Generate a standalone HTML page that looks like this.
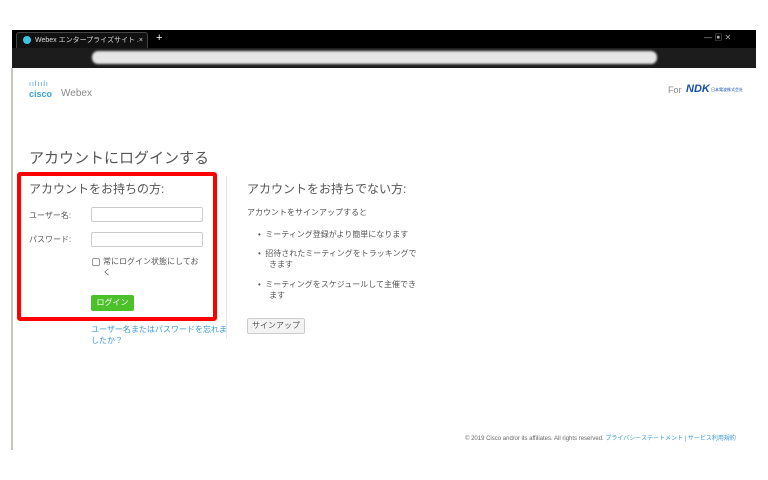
<!DOCTYPE html>
<html><head><meta charset="utf-8"><style>
*{margin:0;padding:0;box-sizing:border-box}
body{width:768px;height:480px;background:#fff;position:relative;overflow:hidden;font-family:"Liberation Sans","Noto Sans CJK JP",sans-serif;color:#555}
.a{position:absolute}
.lbl{font-size:8px;color:#555}
.inp{position:absolute;width:112px;height:15px;border:1px solid #ccc;border-radius:2px;background:#fff}
.li{font-size:8px;color:#555;line-height:11px}
.nw{white-space:nowrap}
</style></head><body>
<div class="a" style="left:12px;top:30px;width:744px;height:18px;background:#000"></div>
<div class="a" style="left:16px;top:32px;width:132px;height:16px;background:#111;border:1px solid #444;border-bottom:none;border-radius:3px 3px 0 0"></div>
<div class="a" style="left:23px;top:36px;width:8px;height:8px;border-radius:50%;background:#3bc4e0"></div>
<div class="a" style="left:35px;top:35px;font-size:7px;color:#ddd;white-space:nowrap">Webex エンタープライズサイト .×</div>
<div class="a" style="left:156px;top:32px;font-size:11px;color:#fff">+</div>
<div class="a" style="left:704px;top:32px;width:50px;height:11px;font-size:8px;color:#aaa">— ▣ ✕</div>
<div class="a" style="left:12px;top:48px;width:744px;height:20px;background:#1c1c1c"></div>
<div class="a" style="left:92px;top:51px;width:565px;height:13px;background:#e6e6e6;border-radius:6px;filter:blur(1px)"></div>
<div class="a" style="left:11px;top:68px;width:2px;height:382px;background:#c8c6c0"></div>
<div class="a" style="left:29px;top:81px;font-size:7px;color:#3aa0d8;letter-spacing:1px">ıılıılı</div>
<div class="a" style="left:29px;top:89px;font-size:9px;font-weight:bold;color:#3aa0d8">cisco</div>
<div class="a" style="left:61px;top:88px;font-size:10px;color:#888">Webex</div>
<div class="a" style="left:668px;top:85px;font-size:9px;color:#888">For</div>
<div class="a" style="left:686px;top:83px;font-size:11px;font-weight:bold;font-style:italic;color:#1a4fb0">NDK</div>
<div class="a" style="left:711px;top:87px;font-size:4px;color:#1a4fb0">日本電波株式会社</div>
<div class="a" style="left:29px;top:147px;font-size:15px;color:#555">アカウントにログインする</div>
<div class="a" style="left:17px;top:172px;width:200px;height:149px;border:4px solid #f00;border-radius:3px"></div>
<div class="a" style="left:29px;top:180px;font-size:12px;color:#555">アカウントをお持ちの方:</div>
<div class="a lbl" style="left:29px;top:210px">ユーザー名:</div>
<div class="inp" style="left:91px;top:207px"></div>
<div class="a lbl" style="left:29px;top:234px">パスワード:</div>
<div class="inp" style="left:91px;top:232px"></div>
<div class="a" style="left:92px;top:258px;width:8px;height:8px;border:1px solid #999;border-radius:2px"></div>
<div class="a li nw" style="left:103px;top:256px">常にログイン状態にしてお<br>く</div>
<div class="a" style="left:91px;top:295px;width:43px;height:16px;background:#4cc22a;border-radius:2px;color:#fff;font-size:8px;text-align:center;line-height:16px">ログイン</div>
<div class="a li nw" style="left:91px;top:324px;color:#3a9ad8">ユーザー名またはパスワードを忘れま<br>したか？</div>
<div class="a" style="left:226px;top:176px;width:1px;height:162px;background:#e4e4e4"></div>
<div class="a" style="left:247px;top:180px;font-size:12px;color:#555">アカウントをお持ちでない方:</div>
<div class="a li" style="left:247px;top:207px">アカウントをサインアップすると</div>
<div class="a li" style="left:258px;top:229px">•&nbsp; ミーティング登録がより簡単になります</div>
<div class="a li" style="left:258px;top:248px;width:162px;padding-left:11px;text-indent:-11px">•&nbsp; 招待されたミーティングをトラッキングできます</div>
<div class="a li" style="left:258px;top:279px;width:162px;padding-left:11px;text-indent:-11px">•&nbsp; ミーティングをスケジュールして主催できます</div>
<div class="a" style="left:247px;top:318px;width:58px;height:16px;background:#f3f3f3;border:1px solid #ccc;border-radius:2px;font-size:8px;text-align:center;line-height:14px;color:#555">サインアップ</div>
<div class="a" style="left:465px;top:433px;font-size:6px;color:#666;white-space:nowrap">© 2019 Cisco and/or its affiliates. All rights reserved. <span style="color:#3a9ad8">プライバシーステートメント | サービス利用規約</span></div>
</body></html>
